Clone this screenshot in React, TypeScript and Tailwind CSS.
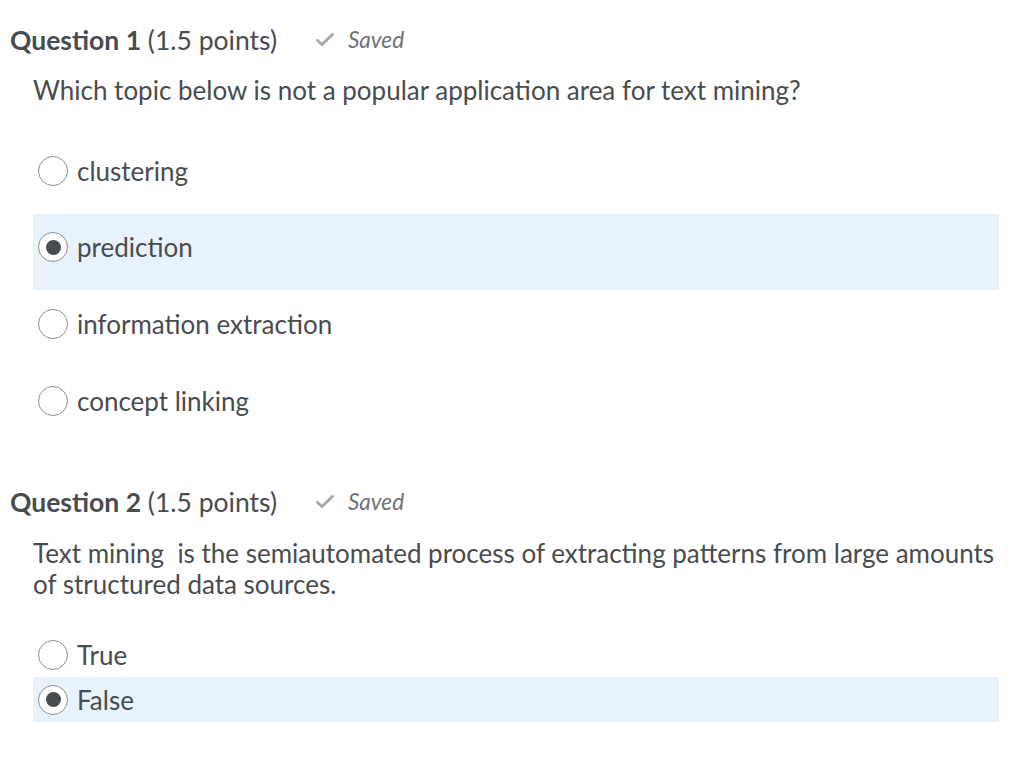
import React from "react";

const Radio = ({ checked }: { checked?: boolean }) => (
  <span className="w-[30px] h-[30px] rounded-full border border-[#8a9093] bg-white flex items-center justify-center shrink-0">
    {checked && <span className="w-[15px] h-[15px] rounded-full bg-[#494c4e]" />}
  </span>
);

const Header = ({ n }: { n: number }) => (
  <div className="flex items-center h-[30px] pl-[10px]">
    <span className="text-[26.5px] leading-[30px]">
      <span className="font-bold">Question {n}</span> (1.5 points)
    </span>
    <span className="flex items-center ml-[38px] text-[#6e7376] italic text-[22.5px]">
      <svg width="20" height="16" viewBox="0 0 20 16" className="mr-[13px]">
        <path d="M2.5 8.5 L7 12.5 L17.5 2.5" fill="none" stroke="#a3a8ab" strokeWidth="3" strokeLinecap="round" strokeLinejoin="round" />
      </svg>
      Saved
    </span>
  </div>
);

const Option = ({ label, checked, h }: { label: string; checked?: boolean; h: string }) => (
  <div className={`ml-[33px] w-[966px] flex items-center pl-[5px] ${h} ${checked ? "bg-[#e8f2fc]" : ""}`}>
    <Radio checked={checked} />
    <span className="ml-[9px] text-[26px] leading-[30px]">{label}</span>
  </div>
);

export default function App() {
  return (
    <div className="font-['Lato',sans-serif] text-[#494c4e] bg-white w-[1024px] h-[757px] overflow-hidden pt-[25px]">
      <Header n={1} />
      <p className="mt-[20px] ml-[33px] text-[26px] leading-[30px]">
        Which topic below is not a popular application area for text mining?
      </p>
      <div className="mt-[32px]">
        <Option label="clustering" h="h-[77px] pb-[10px]" />
        <Option label="prediction" checked h="h-[76px] pb-[10px]" />
        <Option label="information extraction" h="h-[77px] pb-[10px]" />
        <Option label="concept linking" h="h-[77px] pb-[10px]" />
      </div>
      <div className="mt-[43px]">
        <Header n={2} />
      </div>
      <p className="mt-[21px] ml-[33px] text-[26px] leading-[31px] whitespace-pre">
        {"Text mining  is the semiautomated process of extracting patterns from large amounts\nof structured data sources."}
      </p>
      <div className="mt-[32px]">
        <Option label="True" h="h-[45px]" />
        <Option label="False" checked h="h-[45px]" />
      </div>
    </div>
  );
}
